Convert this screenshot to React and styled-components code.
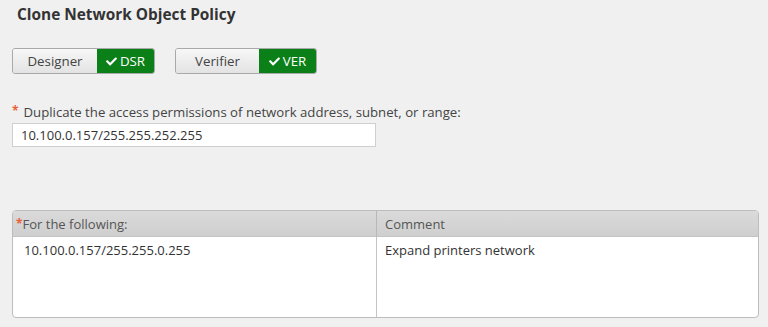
import React from 'react';
import styled, { createGlobalStyle } from 'styled-components';
import { FaCheck } from 'react-icons/fa';

const GlobalStyle = createGlobalStyle`
  html, body {
    margin: 0;
    padding: 0;
    background: #f0f0f0;
  }
  body {
    font-family: "Open Sans", "Noto Sans", Arial, sans-serif;
    color: #333;
  }
`;

const Page = styled.div`
  width: 768px;
  height: 327px;
  box-sizing: border-box;
  padding: 5px 9px 0 12px;
  background: #f0f0f0;
`;

const Title = styled.h1`
  margin: 0 0 0 5px;
  font-size: 15.4px;
  font-weight: 700;
  color: #333;
  line-height: 20px;
`;

const RoleRow = styled.div`
  display: flex;
  gap: 20px;
  margin-top: 23px;
`;

const Role = styled.div`
  display: flex;
  height: 26px;
  border: 1px solid #a9a9a9;
  border-radius: 3px;
  overflow: hidden;
  box-sizing: border-box;
`;

const RoleName = styled.div`
  width: ${p => p.$w}px;
  display: flex;
  align-items: center;
  justify-content: center;
  background: linear-gradient(#f7f7f7, #e3e3e3);
  font-size: 13.3px;
  color: #444;
`;

const RoleBadge = styled.div`
  width: 57px;
  display: flex;
  align-items: center;
  justify-content: center;
  gap: 3px;
  background: #0b7f18;
  color: #fff;
  font-size: 13.3px;

  svg {
    font-size: 11px;
  }
`;

const Field = styled.div`
  margin-top: 30px;
`;

const Label = styled.label`
  display: block;
  font-size: 13.2px;
  color: #444;
  line-height: 17px;
  margin-bottom: 2px;
`;

const Star = styled.span`
  color: #e8603c;
  font-weight: 700;
  font-size: 12px;
  line-height: 0;
  vertical-align: 2px;
  margin-right: ${p => (p.$tight ? 0 : 5)}px;
`;

const Input = styled.div`
  width: 364px;
  height: 24px;
  box-sizing: border-box;
  background: #fff;
  border: 1px solid #cfcfcf;
  padding: 0 8px;
  display: flex;
  align-items: center;
  font-size: 13px;
  color: #333;
`;

const Table = styled.div`
  margin-top: 63px;
  width: 747px;
  height: 108px;
  box-sizing: border-box;
  border: 1px solid #bdbdbd;
  border-radius: 4px;
  overflow: hidden;
  display: grid;
  grid-template-columns: 364px 1fr;
  grid-template-rows: 26px 1fr;
  background: #fff;
`;

const HeadCell = styled.div`
  background: linear-gradient(#dadada, #cfcfcf);
  border-right: ${p => (p.$last ? 'none' : '1px solid #b8b8b8')};
  border-bottom: 1px solid #c4c4c4;
  display: flex;
  align-items: center;
  padding-left: ${p => p.$pad}px;
  font-size: 13px;
  color: #555;
`;

const Cell = styled.div`
  border-right: ${p => (p.$last ? 'none' : '1px solid #c4c4c4')};
  padding: 4px 0 0 ${p => p.$pad}px;
  font-size: 13px;
  color: #333;
`;

export default function App() {
  return (
    <>
      <GlobalStyle />
      <Page>
        <Title>Clone Network Object Policy</Title>
        <RoleRow>
          <Role>
            <RoleName $w={84}>Designer</RoleName>
            <RoleBadge><FaCheck />DSR</RoleBadge>
          </Role>
          <Role>
            <RoleName $w={83}>Verifier</RoleName>
            <RoleBadge><FaCheck />VER</RoleBadge>
          </Role>
        </RoleRow>
        <Field>
          <Label><Star>*</Star>Duplicate the access permissions of network address, subnet, or range:</Label>
          <Input>10.100.0.157/255.255.252.255</Input>
        </Field>
        <Table>
          <HeadCell $pad={3}><Star $tight>*</Star>For the following:</HeadCell>
          <HeadCell $pad={8} $last>Comment</HeadCell>
          <Cell $pad={11}>10.100.0.157/255.255.0.255</Cell>
          <Cell $pad={8} $last>Expand printers network</Cell>
        </Table>
      </Page>
    </>
  );
}
